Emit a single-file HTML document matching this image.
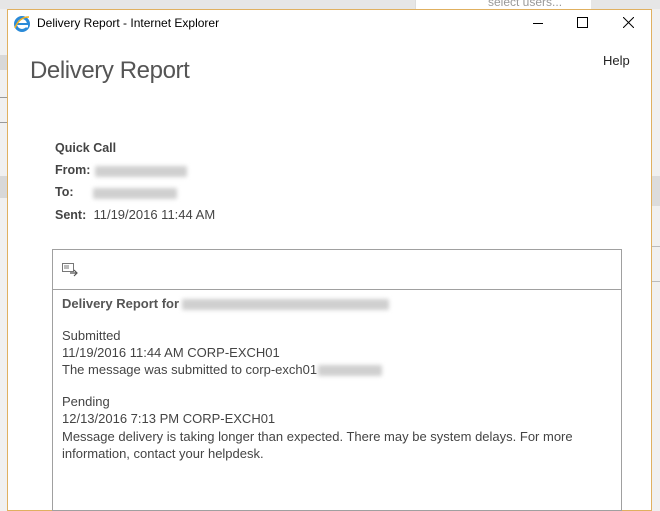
<!DOCTYPE html>
<html><head><style>
body{margin:0;width:660px;height:484px;overflow:hidden;background:#f0f0f0;font-family:"Liberation Sans",sans-serif;position:relative}
.a{position:absolute;white-space:nowrap}
.blur{position:absolute;background:#cfcfcf;filter:blur(2px);height:11px;border-radius:2px}
.t{font-size:13px;color:#444}
</style></head><body>
<div class="a" style="left:0;top:0;width:660px;height:9px;background:#e6e6e6"></div>
<div class="a" style="left:415px;top:0;width:175px;height:9px;background:#fff;border-left:1px solid #ddd"></div>
<div class="a" style="left:488px;top:-5px;font-size:12px;color:#999">select users...</div>
<div class="a" style="left:0;top:55px;width:7px;height:15px;background:#d8d8d8"></div>
<div class="a" style="left:0;top:97px;width:7px;height:1px;background:#999"></div>
<div class="a" style="left:0;top:122px;width:7px;height:1px;background:#999"></div>
<div class="a" style="left:0;top:176px;width:7px;height:22px;background:#d8d8d8"></div>
<div class="a" style="left:652px;top:176px;width:8px;height:30px;background:#dcdcdc"></div>
<div class="a" style="left:652px;top:246px;width:8px;height:1px;background:#bbb"></div>
<div class="a" style="left:652px;top:281px;width:8px;height:1px;background:#bbb"></div>
<div class="a" style="left:7px;top:9px;width:643px;height:500px;background:#fff;border:1px solid #e0b060"></div>
<svg class="a" style="left:13px;top:14px" width="18" height="18" viewBox="0 0 18 18">
<circle cx="9" cy="10" r="6.5" fill="none" stroke="#2a8ad8" stroke-width="3"/>
<rect x="4" y="9" width="10" height="2" fill="#2a8ad8"/>
<rect x="9" y="11" width="6" height="2.5" fill="#fff"/>
<path d="M2 14 Q6 3 16 3" fill="none" stroke="#f0b020" stroke-width="1.5"/>
</svg>
<div class="a" style="left:37px;top:16px;font-size:12px;color:#000">Delivery Report - Internet Explorer</div>
<div class="a" style="left:533px;top:23px;width:10px;height:1px;background:#000"></div>
<div class="a" style="left:577px;top:17px;width:9px;height:9px;border:1px solid #000"></div>
<svg class="a" style="left:623px;top:17px" width="11" height="11"><path d="M0 0L11 11M11 0L0 11" stroke="#000" stroke-width="1"/></svg>
<div class="a" style="left:30px;top:57px;font-size:24px;color:#555;letter-spacing:-0.4px">Delivery Report</div>
<div class="a" style="left:603px;top:53px;font-size:13px;color:#222">Help</div>
<div class="a t" style="left:55px;top:141px;font-weight:bold;font-size:12.5px">Quick Call</div>
<div class="a t" style="left:55px;top:163px;font-weight:bold;font-size:12.5px">From:</div>
<div class="blur" style="left:95px;top:166px;width:92px"></div>
<div class="a t" style="left:55px;top:185px;font-weight:bold;font-size:12.5px">To:</div>
<div class="blur" style="left:93px;top:188px;width:84px"></div>
<div class="a t" style="left:55px;top:207px"><b style="font-size:12.5px">Sent:</b>&nbsp; 11/19/2016 11:44 AM</div>
<div class="a" style="left:52px;top:249px;width:568px;height:260px;border:1px solid #a0a0a0"></div>
<div class="a" style="left:53px;top:289px;width:568px;height:1px;background:#a0a0a0"></div>
<svg class="a" style="left:62px;top:263px" width="17" height="14"><rect x="0.5" y="0.5" width="11" height="8" fill="none" stroke="#777"/><path d="M2 3h5M2 5h5" stroke="#777"/><path d="M8 10h7M12 7l3 3-3 3" fill="none" stroke="#555" stroke-width="1.2"/></svg>
<div class="a t" style="left:62px;top:296px;font-weight:bold;color:#555">Delivery Report for</div>
<div class="blur" style="left:182px;top:299px;width:207px"></div>
<div class="a t" style="left:62px;top:328px">Submitted</div>
<div class="a t" style="left:62px;top:345px">11/19/2016 11:44 AM CORP-EXCH01</div>
<div class="a t" style="left:62px;top:362px">The message was submitted to corp-exch01</div>
<div class="blur" style="left:318px;top:365px;width:64px"></div>
<div class="a t" style="left:62px;top:394px">Pending</div>
<div class="a t" style="left:62px;top:411px">12/13/2016 7:13 PM CORP-EXCH01</div>
<div class="a t" style="left:62px;top:429px">Message delivery is taking longer than expected. There may be system delays. For more</div>
<div class="a t" style="left:62px;top:446px">information, contact your helpdesk.</div>
</body></html>
